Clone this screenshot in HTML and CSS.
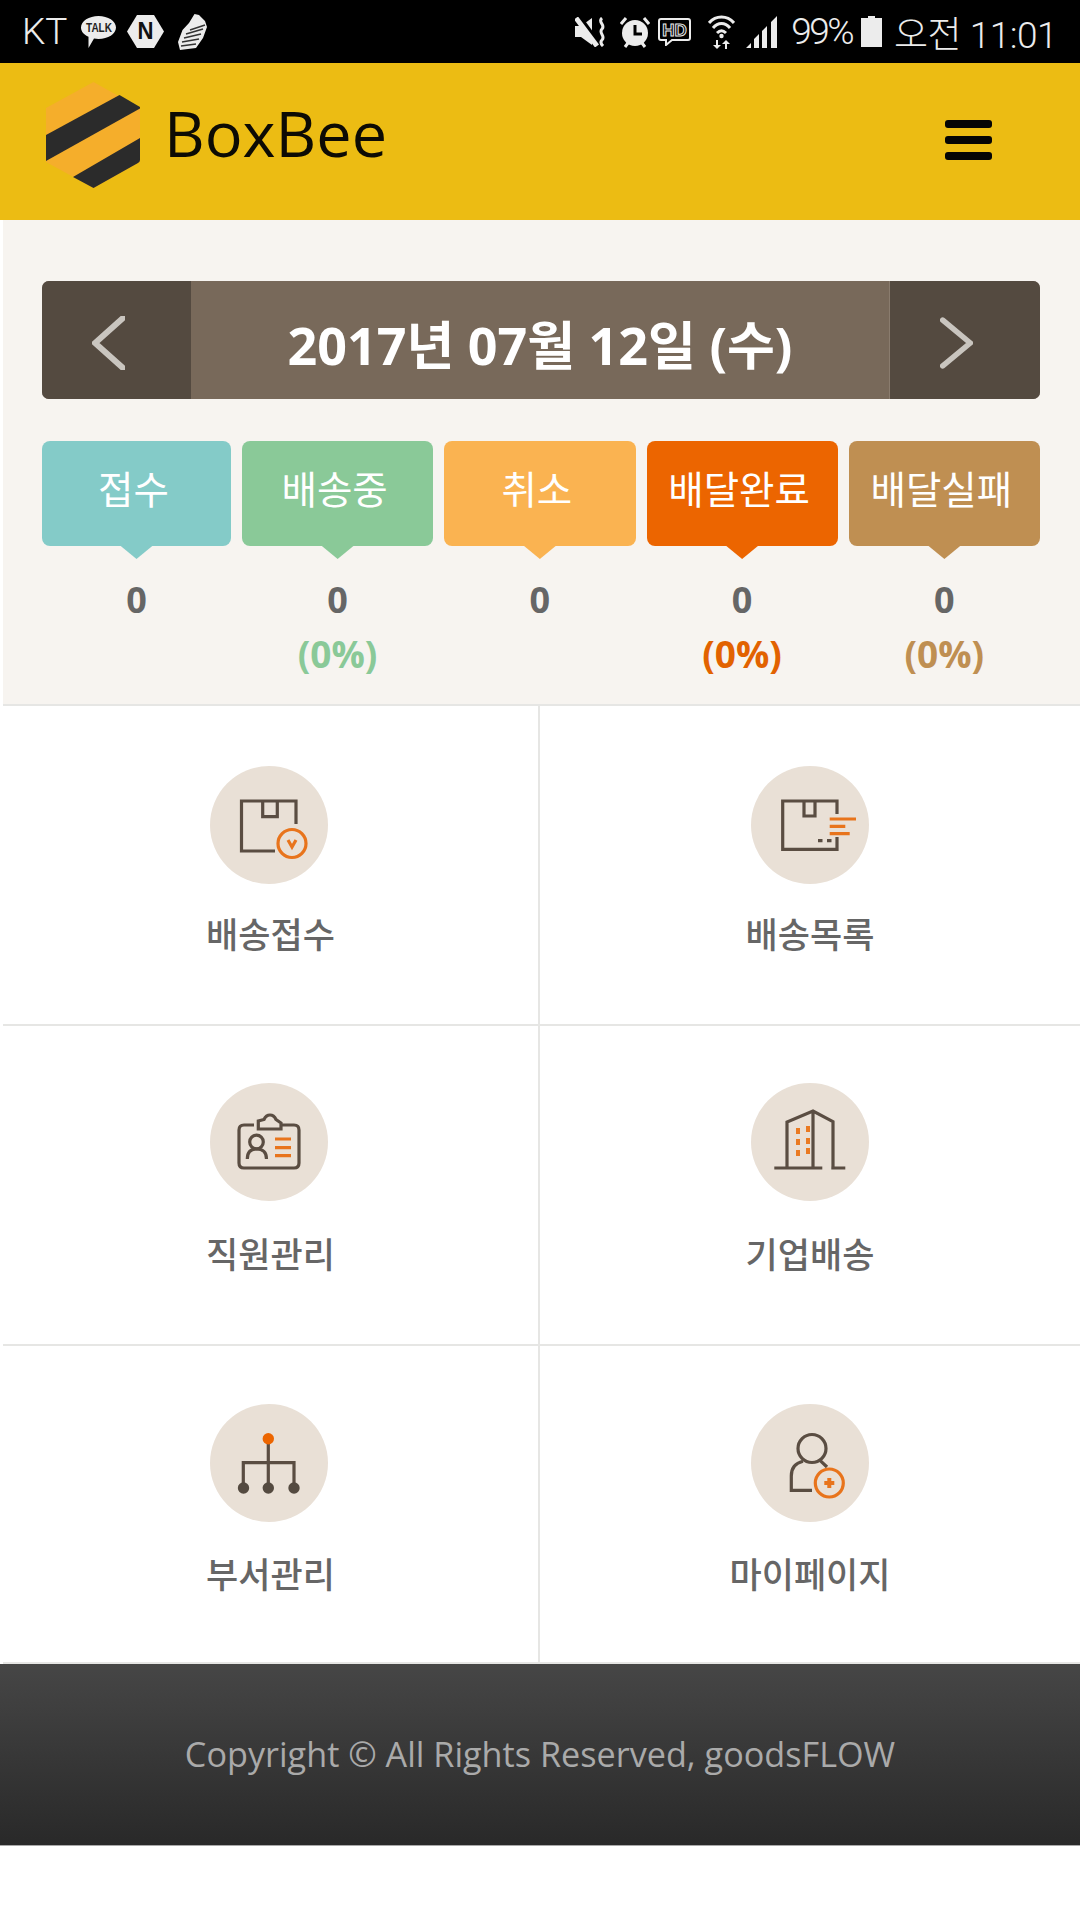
FILE: index.html
```html
<!DOCTYPE html>
<html lang="ko">
<head>
<meta charset="utf-8">
<title>BoxBee</title>
<link rel="stylesheet" href="styles.css">
</head>
<body>
<div class="statusbar">
  <div class="sb-left">
    <span class="sb-kt">KT</span>
    <svg class="i-talk" viewBox="0 0 35 32"><path class="w" d="M17.5 0C27 0 35 5 35 11.500C35 18 27 23 17.500 23C16 23 14.500 22.900 13 22.600L7.500 32L7.500 20.800C3 18.800 0 15.500 0 11.500C0 5 8 0 17.500 0Z"/><text class="talk-t" x="5" y="16" textLength="26" lengthAdjust="spacingAndGlyphs">TALK</text></svg>
    <svg class="i-n" viewBox="0 0 37 33"><path class="w" d="M10 0H27L37 16.500L27 33H10L0 16.500Z"/><text class="n-t" x="18.500" y="24" text-anchor="middle" textLength="16" lengthAdjust="spacingAndGlyphs">N</text></svg>
    <svg class="i-shoe" viewBox="0 0 29 37"><path class="w" d="M16.500 1L21 2L27 8L29 14L25 25L18 35L2 37L0 29L4.500 17L11 10Z"/><path class="sk" d="M3 33L18 31M4 29L21 26M6 25L23 21M8 21L25 16M12 17L27 12"/></svg>
  </div>
  <div class="sb-right">
    <svg class="i-mute" viewBox="0 0 33 30"><path class="w" d="M0 9H6L17 1V28L6 20H0Z"/><path class="sb" d="M3 0L24 29"/><path class="sl" d="M1 1L22 29"/><path class="sl2" d="M27 1C22 5 31 8 27 12C23 16 31 19 27 23C25 25 26 27 28 29"/></svg>
    <svg class="i-alarm" viewBox="0 0 30 32"><circle class="w" cx="15" cy="17" r="13"/><path class="sk2" d="M15 9V18H22"/><path class="sl3" d="M1 8L6 2M29 8L24 2M5 31L8 27M25 31L22 27"/></svg>
    <svg class="i-hd" viewBox="0 0 33 28"><path class="ol" d="M3 1H30Q32 1 32 3V20Q32 22 30 22H14L8 27V22H3Q1 22 1 20V3Q1 1 3 1Z"/><text class="hd-t" x="16.500" y="18" text-anchor="middle">HD</text></svg>
    <svg class="i-wifi" viewBox="0 0 27 34"><path class="sl3" d="M1 8C8 0 19 0 26 8M5 13C10 7 17 7 22 13M9 18C12 15 15 15 18 18"/><circle class="w" cx="13.500" cy="21" r="2.200"/><path class="w" d="M8 25V30H5L9 34L13 30H10V25ZM19 34V29H22L18 25L14 29H17V34Z"/></svg>
    <svg class="i-signal" viewBox="0 0 32 32"><path class="w" d="M0 32L5 27V32ZM8 32V23L13 18V32ZM16 32V15L21 10V32ZM25 32V6L31 0V32Z"/></svg>
    <span class="sb-pct">99%</span>
    <svg class="i-bat" viewBox="0 0 21 31"><path class="w" d="M7 0H14V2H21V31H0V2H7Z"/></svg>
    <span class="sb-time">오전 11:01</span>
  </div>
</div>

<header class="topbar">
  <div class="brand">
    <svg class="logo" viewBox="0 0 95 106">
      <path class="hex" d="M47.500 0L94 26V80L47.500 106L0 80V26Z"/>
      <path class="stripe" d="M73.500 13L94 25V26.500L0 79V53Z"/>
      <path class="stripe" d="M94 56V78Q94 80 92 81L47.500 106L27 95Z"/>
    </svg>
    <span class="brand-name">BoxBee</span>
  </div>
  <div class="burger"><span></span><span></span><span></span></div>
</header>

<section class="summary">
  <div class="datebar">
    <div class="date-btn date-prev"><svg class="chev" viewBox="0 0 33 54"><path d="M31 2L3 27L31 52"/></svg></div>
    <div class="date-text">2017년 07월 12일 (수)</div>
    <div class="date-btn date-next"><svg class="chev" viewBox="0 0 36 54"><path d="M3 2L33 27L3 52"/></svg></div>
  </div>
  <div class="stats">
    <div class="stat teal"><div class="tag">접수</div><div class="num">0</div></div>
    <div class="stat green"><div class="tag">배송중</div><div class="num">0</div><div class="pct">(0%)</div></div>
    <div class="stat amber"><div class="tag">취소</div><div class="num">0</div></div>
    <div class="stat orange"><div class="tag">배달완료</div><div class="num">0</div><div class="pct">(0%)</div></div>
    <div class="stat tan"><div class="tag">배달실패</div><div class="num">0</div><div class="pct">(0%)</div></div>
  </div>
</section>

<nav class="menu">
  <a class="cell">
    <svg class="ico" viewBox="0 0 118 118"><circle class="disc" cx="59" cy="59" r="59"/>
      <path class="br" d="M86 58V35H31.500V85H65"/><path class="br" d="M52.700 35V50.700H67.300V35"/>
      <circle class="or" cx="82" cy="77.500" r="14"/><path class="or" d="M78 74L82 81L86 74"/></svg>
    <span class="cell-label">배송접수</span>
  </a>
  <a class="cell">
    <svg class="ico" viewBox="0 0 118 118"><circle class="disc" cx="59" cy="59" r="59"/>
      <path class="br" d="M86 48V35H31.700V83.300H86V71"/><path class="br" d="M53 35V50H64V35"/><path class="br" d="M67 74.700H71.500M76 74.700H80.500"/>
      <path class="or" d="M78.700 53H105M78.700 60.300H94.300M78.700 67.700H98.700"/></svg>
    <span class="cell-label">배송목록</span>
  </a>
  <a class="cell">
    <svg class="ico" viewBox="0 0 118 118"><circle class="disc" cx="59" cy="59" r="59"/>
      <path class="br" d="M44 42H34Q29 42 29 47V80Q29 85 34 85H84Q89 85 89 80V47Q89 42 84 42H72"/>
      <path class="br" d="M48.300 46V38L54 36.500Q56 32 60 32Q64 32 66 36.500L71 40V46Z"/>
      <circle class="br" cx="46.500" cy="59" r="6.800"/><path class="br" d="M37.300 76Q37.300 66 46.500 66Q56.500 66 56.500 76"/>
      <path class="or" d="M65 56H81M65 64.700H81M65 72.700H81"/></svg>
    <span class="cell-label">직원관리</span>
  </a>
  <a class="cell">
    <svg class="ico" viewBox="0 0 118 118"><circle class="disc" cx="59" cy="59" r="59"/>
      <path class="br" d="M23.300 85H71.300M80.300 85H94.300M36 85V39L62 28L82 38.700V85M62 28V85"/>
      <path class="win" d="M45 45H49V51H45ZM55 43H59V49H55ZM45 56H49V62H45ZM55 55H59V61H55ZM45 67H49V73H45ZM55 65H59V71H55Z"/></svg>
    <span class="cell-label">기업배송</span>
  </a>
  <a class="cell">
    <svg class="ico" viewBox="0 0 118 118"><circle class="disc" cx="59" cy="59" r="59"/>
      <path class="br" d="M58.300 35V84M33.300 83V58.700H84V83"/>
      <circle class="dot" cx="33.500" cy="84" r="5.700"/><circle class="dot" cx="58.300" cy="84" r="5.700"/><circle class="dot" cx="84" cy="84" r="5.700"/>
      <circle class="dot-o" cx="58.300" cy="34.700" r="5.700"/></svg>
    <span class="cell-label">부서관리</span>
  </a>
  <a class="cell">
    <svg class="ico" viewBox="0 0 118 118"><circle class="disc" cx="59" cy="59" r="59"/>
      <circle class="br" cx="61" cy="44.500" r="14"/><path class="br" d="M61 86.300H40.300V72Q40.300 60 52 57.300M69 56.300L76 63"/>
      <circle class="or" cx="78.300" cy="79" r="14"/><path class="or-t" d="M78.300 74V84M73.300 79H83.300"/></svg>
    <span class="cell-label">마이페이지</span>
  </a>
</nav>

<footer class="foot">Copyright © All Rights Reserved, goodsFLOW</footer>
</body>
</html>
```

FILE: styles.css
```css
* { box-sizing: border-box; }
html, body { margin: 0; padding: 0; }
body {
  width: 1080px;
  height: 1920px;
  background: #fff;
  overflow: hidden;
  font-family: "Open Sans", "Noto Sans CJK KR", sans-serif;
}

/* status bar */
.statusbar {
  height: 63px;
  background: #000;
  color: #ececec;
  display: flex;
  justify-content: space-between;
  align-items: center;
  padding: 0 23px 0 22px;
  font-family: Roboto, "Noto Sans CJK KR", sans-serif;
  font-weight: 300;
  font-size: 37px;
}
.sb-left, .sb-right { display: flex; align-items: center; }
.sb-kt { width: 43px; line-height: 63px; }
.sb-pct { margin-left: 13px; letter-spacing: -2.500px; }
.sb-time { margin-left: 12px; letter-spacing: -0.500px; }
.w { fill: #ececec; }
.talk-t { font: 700 12px "Liberation Sans", sans-serif; fill: #222; }
.n-t { font: 900 24px "Liberation Sans", sans-serif; fill: #111; }
.hd-t { font: 700 17px "Liberation Sans", sans-serif; fill: #000; stroke: #ececec; stroke-width: 1; }
.sk, .sk2, .sb, .sl, .sl2, .sl3, .ol { fill: none; stroke-width: 2; }
.sk { stroke: #333; stroke-width: 1.500; }
.sk2 { stroke: #000; stroke-width: 3; }
.sb { stroke: #000; stroke-width: 7; }
.sl { stroke: #ececec; stroke-width: 5; }
.sl2 { stroke: #ececec; stroke-width: 3; }
.sl3 { stroke: #ececec; stroke-width: 3; }
.ol { stroke: #ececec; }
.i-talk { width: 35px; height: 32px; margin-left: 16px; }
.i-n { width: 37px; height: 33px; margin-left: 11px; margin-top: -1px; }
.i-shoe { width: 29px; height: 37px; margin-left: 14px; }
.i-mute { width: 33px; height: 30px; }
.i-alarm { width: 30px; height: 32px; margin-left: 12px; }
.i-hd { width: 33px; height: 28px; margin-left: 8px; }
.i-wifi { width: 27px; height: 34px; margin-left: 17px; }
.i-signal { width: 32px; height: 32px; margin-left: 11px; }
.i-bat { width: 21px; height: 31px; margin-left: 9px; }

/* top bar */
.topbar {
  height: 157px;
  background: #ecbc13;
  display: flex;
  justify-content: space-between;
  align-items: center;
  padding: 0 88px 4px 46px;
}
.brand { display: flex; align-items: center; margin-bottom: 9px; }
.logo { width: 95px; height: 106px; }
.hex { fill: #f5ae2b; }
.stripe { fill: #2b2b2b; }
.brand-name {
  margin-left: 23px;
  padding-bottom: 5px;
  font-size: 63px;
  line-height: 80px;
  color: #0d0b04;
  font-family: "Open Sans", sans-serif;
}
.burger { width: 47px; display: flex; flex-direction: column; gap: 8px; }
.burger span { height: 8px; border-radius: 3px; background: #050505; }

/* summary */
.summary {
  height: 486px;
  margin-left: 3px;
  padding: 61px 40px 0 39px;
  background: #f7f4f0;
  border-bottom: 2px solid #e6e6e4;
}
.datebar {
  height: 118px;
  display: flex;
  border-radius: 7px;
  overflow: hidden;
  background: #78695a;
}
.date-btn {
  width: 149px;
  background: #544a40;
  display: flex;
  align-items: center;
  justify-content: center;
}
.date-prev { padding-right: 21px; padding-left: 5px; }
.date-next { width: 151px; padding-left: 10px; border-left: 1px solid #8a7c6e; padding-right: 28px; }
.chev { width: 33px; height: 54px; margin-top: 5px; }
.chev path { fill: none; stroke: #c9c5bf; stroke-width: 6; stroke-linecap: round; }
.date-text {
  flex: 1;
  padding-top: 10px;
  color: #fff;
  font-weight: 700;
  font-size: 52px;
  line-height: 108px;
  text-align: center;
  white-space: nowrap;
}
.stats { display: flex; gap: 11px; margin-top: 42px; }
.stat { flex: 1 1 0; text-align: center; }
.stat:first-child { flex: 0 0 189px; }
.tag {
  position: relative;
  height: 105px;
  padding-right: 6px;
  border-radius: 8px;
  color: #fff;
  font-size: 38.500px;
  line-height: 96px;
  white-space: nowrap;
}
.tag::after {
  content: "";
  position: absolute;
  left: 50%;
  bottom: -13px;
  width: 34px;
  height: 14px;
  margin-left: -17px;
  clip-path: polygon(0 0, 100% 0, 50% 100%);
  background: inherit;
}
.num {
  margin-top: 31px;
  font-size: 36px;
  font-weight: 700;
  line-height: 46px;
  color: #666;
}
.pct {
  margin-top: 6px;
  font-size: 37px;
  font-weight: 700;
  line-height: 50px;
}
.teal .tag { background: #84cbc8; }
.green .tag { background: #8ac998; }
.amber .tag { background: #fab351; }
.orange .tag { background: #ec6500; }
.tan .tag { background: #bf8f52; }
.green .pct { color: #8ac998; }
.orange .pct { color: #e26200; }
.tan .pct { color: #bf8f52; }

/* menu grid */
.menu {
  margin-left: 3px;
  display: grid;
  grid-template-columns: 537px 1fr;
  grid-template-rows: 320px 320px 318px;
  height: 958px;
}
.cell {
  display: flex;
  flex-direction: column;
  align-items: center;
  padding-top: 58px;
  border-bottom: 2px solid #e6e6e4;
}
.cell:nth-child(odd) { border-right: 2px solid #e6e6e4; }
.cell:nth-child(odd) .ico { margin-right: 4px; }
.cell:nth-child(-n+2) { padding-top: 60px; }
.cell:nth-child(3), .cell:nth-child(4) { padding-top: 57px; }
.ico { width: 118px; height: 118px; }
.cell-label {
  margin-top: 29px;
  font-size: 35px;
  line-height: 48px;
  font-weight: 500;
  color: #666;
}
.cell:nth-child(-n+2) .cell-label { margin-top: 27px; }
.cell:nth-child(3) .cell-label, .cell:nth-child(4) .cell-label { margin-top: 30px; }
.disc { fill: #e9e0d6; }
.br, .or, .or-t { fill: none; stroke-width: 3.200; }
.br { stroke: #5a4d42; }
.or { stroke: #e8741c; }
.or-t { stroke: #e8741c; stroke-width: 4; }
.win { fill: #ea7a22; }
.dot { fill: #544a40; }
.dot-o { fill: #ec6500; }

/* footer */
.foot {
  height: 182px;
  background: linear-gradient(#464646, #292929);
  border-bottom: 1px solid #a8a8a8;
  color: #aaa;
  font-size: 34.200px;
  line-height: 179px;
  text-align: center;
  white-space: nowrap;
}
```
